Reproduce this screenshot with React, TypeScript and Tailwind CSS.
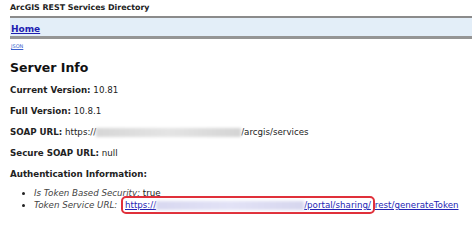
const font = { fontFamily: '"DejaVu Sans", Verdana, sans-serif' };

function Blur({ className }: { className: string }) {
  return <span className={`inline-block align-middle blur-[1.5px] ${className}`} />;
}

export default function App() {
  return (
    <div style={font} className="bg-white text-black w-[474px] h-[216px] overflow-hidden pl-[10px] pr-[2px]">
      <div className="h-[16px] pt-[3px] text-[7.9px] font-bold leading-[10px] text-[#222]">
        ArcGIS REST Services Directory
      </div>
      <div className="border-t-2 border-b-[3px] border-t-[#8b8b8b] border-b-[#959595] bg-[#e3eef8] h-[23px] pl-[1px] pt-[3px] leading-[12px]">
        <a href="#" className="text-[9px] font-bold text-[#2020b0] underline leading-[12px]">
          Home
        </a>
      </div>
      <div className="mt-[4px] pl-[1px] text-[5px] leading-[6px] text-[#3a5fcd] underline">JSON</div>
      <h2 className="mt-[12px] text-[12.5px] font-bold leading-[14px] text-[#111]">Server Info</h2>
      <div className="text-[8.7px] leading-[11px] text-[#222]">
        <p className="mt-[10px]">
          <b>Current Version:</b> 10.81
        </p>
        <p className="mt-[10px]">
          <b>Full Version:</b> 10.8.1
        </p>
        <p className="mt-[10px] whitespace-nowrap">
          <b>SOAP URL:</b> https://
          <Blur className="w-[145px] h-[9px] bg-gradient-to-r from-[#d6d6d6] via-[#e4e4e4] to-[#d4d4d4]" />
          /arcgis/services
        </p>
        <p className="mt-[10px]">
          <b>Secure SOAP URL:</b> null
        </p>
        <p className="mt-[10px]">
          <b>Authentication Information:</b>
        </p>
        <ul className="mt-[8px] pl-[24px] list-disc leading-[11px]">
          <li className="h-[12px]">
            <i className="text-[#444]">Is Token Based Security:</i> true
          </li>
          <li className="h-[12px] whitespace-nowrap">
            <i className="text-[#444]">Token Service URL:</i>{" "}
            <span className="rounded-[5px] border-2 border-[#e0303a] px-[2px] py-[2px] ml-[1px]">
              <a href="#" className="text-[#2525b5] underline">https://</a>
              <Blur className="w-[148px] h-[9px] bg-gradient-to-r from-[#d8d8f0] via-[#e2e2f6] to-[#d6d6ee]" />
              <a href="#" className="text-[#2525b5] underline">/portal/sharing/</a>
            </span>
            <a href="#" className="text-[#2525b5] underline">rest/generateToken</a>
          </li>
        </ul>
      </div>
    </div>
  );
}
